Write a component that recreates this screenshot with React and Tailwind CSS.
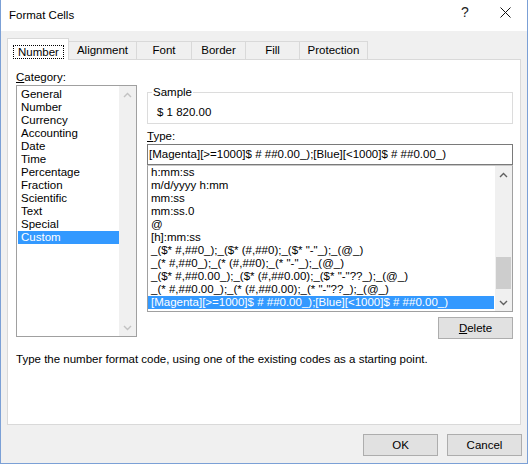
import React from "react";

const categories = [
  "General", "Number", "Currency", "Accounting", "Date", "Time",
  "Percentage", "Fraction", "Scientific", "Text", "Special", "Custom",
];

const formats = [
  "h:mm:ss",
  "m/d/yyyy h:mm",
  "mm:ss",
  "mm:ss.0",
  "@",
  "[h]:mm:ss",
  '_($* #,##0_);_($* (#,##0);_($* "-"_);_(@_)',
  '_(* #,##0_);_(* (#,##0);_(* "-"_);_(@_)',
  '_($* #,##0.00_);_($* (#,##0.00);_($* "-"??_);_(@_)',
  '_(* #,##0.00_);_(* (#,##0.00);_(* "-"??_);_(@_)',
  "[Magenta][>=1000]$ # ##0.00_);[Blue][<1000]$ # ##0.00_)",
];

const tabs = [
  { label: "Alignment", w: "w-[68px]" },
  { label: "Font", w: "w-[55px]" },
  { label: "Border", w: "w-[54px]" },
  { label: "Fill", w: "w-[54px]" },
  { label: "Protection", w: "w-[68px]" },
];

// small scrollbar caret
const Caret = ({ up, color }) => (
  <svg width="9" height="6" viewBox="0 0 9 6">
    <path
      d={up ? "M1 5 L4.5 1.5 L8 5" : "M1 1 L4.5 4.5 L8 1"}
      fill="none"
      stroke={color}
      strokeWidth="1.4"
    />
  </svg>
);

const Button = ({ children, className = "" }) => (
  <button className={`h-[22px] w-[75px] bg-[#e1e1e1] border border-[#adadad] flex items-center justify-center leading-[15px] ${className}`}>
    {children}
  </button>
);

export default function App() {
  return (
    <div className="w-[528px] h-[464px] bg-[#f0f0f0] border-l border-r border-b border-[#7ba0d6] flex flex-col font-['Liberation_Sans',Arial,sans-serif] text-[11.5px] text-black">
      {/* title bar */}
      <div className="h-[31px] bg-white flex items-start shrink-0">
        <div className="pl-[8px] h-[31px] flex items-center flex-1">Format Cells</div>
        <div className="pt-[4px] w-[20px] text-center text-[14px] leading-[16px] text-[#222] font-['Liberation_Sans',sans-serif]">?</div>
        <div className="pt-[7px] ml-[25px] mr-[16px]">
          <svg width="11" height="11" viewBox="0 0 11 11">
            <path d="M0.5 0.5 L10.5 10.5 M10.5 0.5 L0.5 10.5" stroke="#111" strokeWidth="1" />
          </svg>
        </div>
      </div>

      <div className="px-[6px] pt-[7px] flex flex-col">
        {/* tabs */}
        <div className="flex items-end h-[21px]">
          <div className="relative z-10 -mb-px h-[22px] w-[62px] bg-white border-l border-t border-r border-[#d9d9d9] pt-[5px] pl-[5px]">
            <span className="inline-block border border-dotted border-black px-[4px] leading-[12px]">Number</span>
          </div>
          {tabs.map((t) => (
            <div key={t.label} className={`h-[18px] ${t.w} border-t border-r border-[#d9d9d9] bg-[#f0f0f0] flex items-center justify-center leading-[15px]`}>
              {t.label}
            </div>
          ))}
        </div>

        {/* tab panel */}
        <div className="h-[366px] bg-white border border-[#d9d9d9] pl-[8px] pr-[7px] pt-[10px] flex flex-col">
          <div className="flex gap-[10px] items-start">
            {/* category */}
            <div className="w-[121px] flex flex-col">
              <div className="leading-[15px]"><span className="underline">C</span>ategory:</div>
              <div className="h-[252px] border border-[#a0a0a0] flex">
                <div className="flex-1 pt-[2px] pl-[1px]">
                  {categories.map((c) => (
                    <div
                      key={c}
                      className={`h-[13px] leading-[13px] pl-[3px] ${c === "Custom" ? "bg-[#3399ff] text-white" : ""}`}
                    >
                      {c}
                    </div>
                  ))}
                </div>
                <div className="w-[17px] bg-[#f0f0f0] flex flex-col justify-between">
                  <div className="h-[17px] flex items-center justify-center"><Caret up color="#c2c2c2" /></div>
                  <div className="h-[17px] flex items-center justify-center"><Caret color="#c2c2c2" /></div>
                </div>
              </div>
            </div>

            {/* type */}
            <div className="w-[366px] flex flex-col">
              <fieldset className="mt-[15px] border border-[#dcdcdc]">
                <legend className="ml-[4px] px-[1px] leading-[15px]">Sample</legend>
                <div className="pl-[9px] pt-[5px] pb-[3px] leading-[15px]">$ 1 820.00</div>
              </fieldset>
              <div className="mt-[5px] leading-[15px]"><span className="underline">T</span>ype:</div>
              <div className="h-[21px] border border-[#7a7a7a] pl-[1px] flex items-center whitespace-nowrap">
                {formats[formats.length - 1]}
              </div>
              <div className="h-[147px] border border-[#a0a0a0] border-t-[#c8c8c8] flex">
                <div className="flex-1 pr-[1px]">
                  {formats.map((f, i) => (
                    <div
                      key={f}
                      className={`h-[13px] leading-[13px] pl-[3px] whitespace-nowrap ${i === formats.length - 1 ? "bg-[#3399ff] text-white" : ""}`}
                    >
                      {f}
                    </div>
                  ))}
                </div>
                <div className="w-[17px] bg-[#f0f0f0] flex flex-col">
                  <div className="h-[17px] flex items-center justify-center"><Caret up color="#606060" /></div>
                  <div className="flex-1 flex flex-col justify-end pb-[5px] px-[1px]">
                    <div className="h-[32px] bg-[#cdcdcd]" />
                  </div>
                  <div className="h-[17px] flex items-center justify-center"><Caret color="#606060" /></div>
                </div>
              </div>
              <Button className="mt-[5px] self-end">
                <span><span className="underline">D</span>elete</span>
              </Button>
            </div>
          </div>

          <div className="mt-[13px] leading-[15px]">
            Type the number format code, using one of the existing codes as a starting point.
          </div>
        </div>

        {/* footer */}
        <div className="mt-[9px] -mr-px flex justify-end gap-[9px]">
          <Button className="border-[#0078d7]">OK</Button>
          <Button>Cancel</Button>
        </div>
      </div>
    </div>
  );
}
